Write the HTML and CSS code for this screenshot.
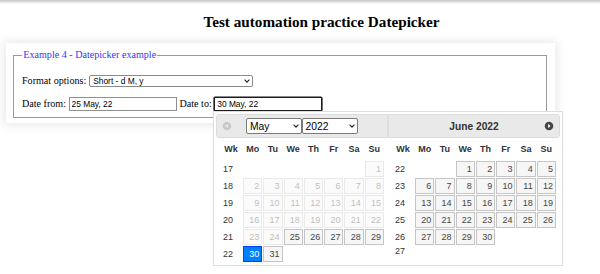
FILE: index.html
```html
<!DOCTYPE html>
<html>
<head>
<meta charset="utf-8">
<title>Datepicker</title>
<link rel="stylesheet" href="styles.css">
</head>
<body>
<div class="topbar"></div>
<h2 class="title">Test automation practice Datepicker</h2>
<div class="card">
  <fieldset class="box">
    <legend>Example 4 - Datepicker example</legend>
    <div class="row row1">
      <label class="lbl">Format options:</label>
      <div class="sel fmt"><span>Short - d M, y</span><svg class="chev" width="6" height="4" viewBox="0 0 6 4"><polyline points="0.6,0.6 3,3.1 5.4,0.6" fill="none" stroke="#222" stroke-width="1.1"/></svg></div>
    </div>
    <div class="row row2">
      <label class="lbl">Date from:</label>
      <input class="inp" type="text" value="25 May, 22">
      <label class="lbl">Date to:</label>
      <input class="inp focus" type="text" value="30 May, 22">
    </div>
  </fieldset>
</div>

<div class="dp">
  <div class="group">
    <div class="hdr hdr-l">
      <svg class="ico" width="10" height="10" viewBox="0 0 10 10"><circle cx="5" cy="5" r="4.3" fill="#c9c9c9"/><polygon points="5.9,3 3.4,5 5.9,7" fill="#eeeeee"/></svg>
      <div class="sel hsel month"><span>May</span><svg class="chev" width="6" height="4" viewBox="0 0 6 4"><polyline points="0.6,0.6 3,3.1 5.4,0.6" fill="none" stroke="#222" stroke-width="1.1"/></svg></div>
      <div class="sel hsel year"><span>2022</span><svg class="chev" width="6" height="4" viewBox="0 0 6 4"><polyline points="0.6,0.6 3,3.1 5.4,0.6" fill="none" stroke="#222" stroke-width="1.1"/></svg></div>
    </div>
    <div class="cal">
      <span class="dh">Wk</span><span class="dh">Mo</span><span class="dh">Tu</span><span class="dh">We</span><span class="dh">Th</span><span class="dh">Fr</span><span class="dh">Sa</span><span class="dh">Su</span>

      <span class="wk">17</span><span></span><span></span><span></span><span></span><span></span><span></span><span class="d dis">1</span>

      <span class="wk">18</span><span class="d dis">2</span><span class="d dis">3</span><span class="d dis">4</span><span class="d dis">5</span><span class="d dis">6</span><span class="d dis">7</span><span class="d dis">8</span>

      <span class="wk">19</span><span class="d dis">9</span><span class="d dis">10</span><span class="d dis">11</span><span class="d dis">12</span><span class="d dis">13</span><span class="d dis">14</span><span class="d dis">15</span>

      <span class="wk">20</span><span class="d dis">16</span><span class="d dis">17</span><span class="d dis">18</span><span class="d dis">19</span><span class="d dis">20</span><span class="d dis">21</span><span class="d dis">22</span>

      <span class="wk">21</span><span class="d dis">23</span><span class="d dis">24</span><span class="d">25</span><span class="d">26</span><span class="d">27</span><span class="d">28</span><span class="d">29</span>

      <span class="wk">22</span><span class="d act">30</span><span class="d">31</span><span></span><span></span><span></span><span></span><span></span>
    </div>
  </div>
  <div class="group">
    <div class="hdr hdr-r">
      <span class="spacer"></span>
      <span class="mtitle">June 2022</span>
      <svg class="ico" width="10" height="10" viewBox="0 0 10 10"><circle cx="5" cy="5" r="4.3" fill="#454545"/><polygon points="4.1,3 6.6,5 4.1,7" fill="#ffffff"/></svg>
    </div>
    <div class="cal cal-r">
      <span class="dh">Wk</span><span class="dh">Mo</span><span class="dh">Tu</span><span class="dh">We</span><span class="dh">Th</span><span class="dh">Fr</span><span class="dh">Sa</span><span class="dh">Su</span>

      <span class="wk">22</span><span></span><span></span><span class="d">1</span><span class="d">2</span><span class="d">3</span><span class="d">4</span><span class="d">5</span>

      <span class="wk">23</span><span class="d">6</span><span class="d">7</span><span class="d">8</span><span class="d">9</span><span class="d">10</span><span class="d">11</span><span class="d">12</span>

      <span class="wk">24</span><span class="d">13</span><span class="d">14</span><span class="d">15</span><span class="d">16</span><span class="d">17</span><span class="d">18</span><span class="d">19</span>

      <span class="wk">25</span><span class="d">20</span><span class="d">21</span><span class="d">22</span><span class="d">23</span><span class="d">24</span><span class="d">25</span><span class="d">26</span>

      <span class="wk">26</span><span class="d">27</span><span class="d">28</span><span class="d">29</span><span class="d">30</span><span></span><span></span><span></span>

      <span class="wk">27</span><span></span><span></span><span></span><span></span><span></span><span></span><span></span>
    </div>
  </div>
</div>
</body>
</html>
```

FILE: styles.css
```css
html, body {
  margin: 0;
  padding: 0;
  background: #ffffff;
}

body {
  position: relative;
  width: 600px;
  height: 274px;
  overflow: hidden;
  font-family: "Liberation Serif", "Times New Roman", serif;
  color: #000;
}

.topbar {
  height: 4px;
  background: linear-gradient(#c4c4c4, #ffffff);
}

.title {
  margin: 9px 0 12px;
  padding-left: 43px;
  text-align: center;
  font-size: 15.2px;
  line-height: 18px;
  font-weight: bold;
}

.card {
  margin-left: 6px;
  width: 549px;
  box-sizing: border-box;
  padding: 6px 8px 5px 7px;
  background: #fff;
  box-shadow: 0 0 10px 2px rgba(0, 0, 0, 0.09);
}

.box {
  margin: 0;
  border: 1px solid #9a9a9a;
  padding: 13px 8px 6px;
  min-width: 0;
}

.box legend {
  padding: 0 1.3px;
  font-size: 10.1px;
  line-height: 12px;
  color: #3636ff;
}

.row {
  display: flex;
  align-items: center;
  height: 14px;
}

.row2 {
  margin-top: 9px;
}

.lbl {
  font-size: 10.1px;
  line-height: 12px;
  margin-right: 2.5px;
  white-space: nowrap;
}

.sel {
  display: flex;
  align-items: center;
  justify-content: space-between;
  box-sizing: border-box;
  border: 1px solid #8a8a8a;
  border-radius: 2px;
  background: #fff;
  font-family: "Liberation Sans", Arial, sans-serif;
  color: #000;
  padding: 0 2px 0 3.5px;
  white-space: nowrap;
}

.chev {
  display: block;
  flex: none;
}

.fmt {
  width: 164px;
  height: 12px;
  font-size: 8.4px;
}

.inp {
  box-sizing: border-box;
  width: 108px;
  height: 14px;
  margin: 0 3px 0 0;
  border: 1px solid #8f8f8f;
  padding: 0 2px;
  font: 8.4px "Liberation Sans", Arial, sans-serif;
  color: #000;
  background: #fff;
  outline: none;
}

.inp.focus {
  border-color: #1b1b1b;
  box-shadow: 0 0 0 0.6px #1b1b1b;
  border-radius: 1px;
}

/* datepicker popup */
.dp {
  position: absolute;
  left: 213px;
  top: 111px;
  width: 350px;
  box-sizing: border-box;
  display: flex;
  border: 1px solid #dddddd;
  background: #fff;
  padding: 2px 2px 0;
  font-family: "Liberation Sans", Arial, sans-serif;
  color: #333;
}

.group {
  width: 172px;
}

.hdr {
  height: 24px;
  box-sizing: border-box;
  border: 1px solid #dddddd;
  background: #e9e9e9;
  display: flex;
  align-items: center;
}

.hdr-l {
  border-radius: 3px 0 0 3px;
}

.hdr-r {
  border-radius: 0 3px 3px 0;
}

.ico {
  display: block;
  flex: none;
  margin: 0 4px 0 5px;
}

.hdr-r .ico {
  margin: 0 5px 0 4px;
}

.spacer {
  width: 19px;
  flex: none;
}

.mtitle {
  flex: 1;
  text-align: center;
  font-weight: bold;
  font-size: 10.2px;
  color: #333;
}

.hsel {
  height: 16px;
  width: 56px;
  font-size: 10.3px;
  border-color: #7a7a7a;
  padding-left: 3px;
}

.month {
  margin-left: 10px;
}

.year {
  padding-left: 2.5px;
}

.cal {
  display: grid;
  grid-template-columns: 22px repeat(7, 1fr);
  grid-template-rows: 22px repeat(5, 16px) 16px;
  column-gap: 1px;
  row-gap: 1px;
  width: 164px;
  margin: 0 4px 3px;
  font-size: 9px;
}

.cal-r {
  grid-template-rows: 22px repeat(5, 16px) 10px;
}

.dh {
  display: flex;
  align-items: center;
  justify-content: center;
  font-weight: bold;
  color: #333;
}

.wk {
  display: flex;
  align-items: center;
  padding-left: 3px;
  color: #333;
}

.d {
  box-sizing: border-box;
  border: 1px solid #c5c5c5;
  background: #f6f6f6;
  color: #454545;
  text-align: right;
  padding-right: 2px;
  line-height: 14px;
}

.d.dis {
  opacity: 0.35;
}

.d.act {
  background: #007fff;
  border-color: #003eff;
  color: #fff;
}
```
